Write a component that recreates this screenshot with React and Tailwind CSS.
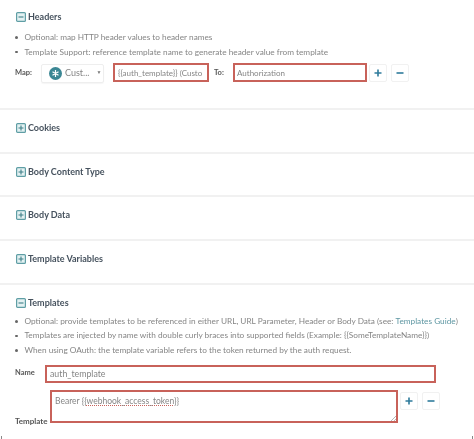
import React from 'react'

function ToggleIcon({ open }) {
    return (
        <svg width="10" height="10" viewBox="0 0 10 10" className="shrink-0">
            <rect x="0.6" y="0.6" width="8.8" height="8.8" rx="1" fill="#e3f1f2" stroke="#5f9ea5" strokeWidth="1.2" />
            <path d={open ? 'M2.5 5h5' : 'M2.5 5h5M5 2.5v5'} stroke="#3f7f88" strokeWidth="1.1" />
        </svg>
    )
}

function SectionTitle({ open, children }) {
    return (
        <div className="flex items-center gap-[2px] h-[12px]">
            <ToggleIcon open={open} />
            <span className="text-[9px] leading-[12px] font-bold text-[#46525e]">{children}</span>
        </div>
    )
}

function Collapsed({ title }) {
    return (
        <div className="h-[43.7px] pt-[12px] pl-[16px] border-b-2 border-[#f1f1f1]">
            <SectionTitle>{title}</SectionTitle>
        </div>
    )
}

function Notes({ items }) {
    return (
        <ul className="flex flex-col gap-[3.5px]">
            {items.map((item, index) => (
                <li key={index} className="flex items-center h-[11px] pl-[15px] text-[8.25px] leading-[11px] text-[#858585] whitespace-nowrap">
                    <span className="w-[2.5px] h-[2.5px] mr-[7px] rounded-full bg-[#666] shrink-0"></span>
                    {item}
                </li>
            ))}
        </ul>
    )
}

function AddRemove() {
    return (
        <div className="flex gap-[4px]">
            <button className="w-[18px] h-[18px] flex items-center justify-center rounded-[2px] border border-[#f1f1f1]">
                <svg width="8" height="8" viewBox="0 0 8 8"><path d="M0.5 4h7M4 0.5v7" stroke="#2f7b9c" strokeWidth="1.6" /></svg>
            </button>
            <button className="w-[18px] h-[18px] flex items-center justify-center rounded-[2px] border border-[#f1f1f1]">
                <svg width="8" height="8" viewBox="0 0 8 8"><path d="M0.5 4h7" stroke="#2f7b9c" strokeWidth="1.6" /></svg>
            </button>
        </div>
    )
}

export default function App() {
    return (
        <div className="w-[474px] h-[439px] flex flex-col bg-white overflow-hidden font-['Lato',sans-serif] blur-[0.3px]">
            {/* Headers */}
            <div className="h-[110px] shrink-0 pt-[11px] border-b-2 border-[#f1f1f1]">
                <div className="pl-[16px]"><SectionTitle open>Headers</SectionTitle></div>
                <div className="mt-[9px]">
                    <Notes items={[
                        'Optional: map HTTP header values to header names',
                        'Template Support: reference template name to generate header value from template',
                    ]} />
                </div>
                <div className="flex items-center mt-[5px] pl-[15px] text-[8px] text-[#858585]">
                    <span className="w-[26px] text-[7.5px] font-bold text-[#555]">Map:</span>
                    <div className="w-[63px] h-[19px] flex items-center pl-[7px] mt-[1px] rounded-[2px] border border-[#eeeeee] shadow-[0_1px_1px_rgba(0,0,0,0.04)]">
                        <svg width="13" height="13" viewBox="0 0 13 13" className="shrink-0">
                            <circle cx="6.5" cy="6.5" r="6.5" fill="#3b8794" />
                            <path d="M6.5 3v7M3.5 4.7l6 3.6M9.5 4.7l-6 3.6" stroke="#fff" strokeWidth="1.2" />
                        </svg>
                        <span className="ml-[3px] text-[9px]">Cust...</span>
                        <span className="ml-[7px] text-[5px] text-[#777]">▼</span>
                    </div>
                    <div className="w-[96px] h-[19px] ml-[9px] flex items-center pl-[3px] border-2 border-[#c8625a] overflow-hidden whitespace-nowrap">{'{{auth_template}} (Custo'}</div>
                    <span className="w-[24px] pl-[5px] text-[7.5px] font-bold text-[#555]">To:</span>
                    <div className="w-[134px] h-[19px] flex items-center pl-[2px] border-2 border-[#c8625a]">Authorization</div>
                    <div className="ml-[2px]"><AddRemove /></div>
                </div>
            </div>

            <div className="shrink-0">
                <Collapsed title="Cookies" />
                <Collapsed title="Body Content Type" />
                <Collapsed title="Body Data" />
                <Collapsed title="Template Variables" />
            </div>

            {/* Templates */}
            <div className="shrink-0 pt-[12px]">
                <div className="pl-[16px]"><SectionTitle open>Templates</SectionTitle></div>
                <div className="mt-[7px]">
                    <Notes items={[
                        <>Optional: provide templates to be referenced in either URL, URL Parameter, Header or Body Data (see:&nbsp;<span className="text-[#5f97a3]">Templates Guide</span>)</>,
                        'Templates are injected by name with double curly braces into supported fields (Example: {{SomeTemplateName}})',
                        'When using OAuth: the template variable refers to the token returned by the auth request.',
                    ]} />
                </div>
                <div className="flex items-center mt-[9px] pl-[15px] text-[8.8px] text-[#858585]">
                    <span className="w-[30px] -mt-[2px] text-[7.5px] font-bold text-[#555]">Name</span>
                    <div className="w-[391px] h-[18px] flex items-center pl-[3px] border-2 border-[#c8625a]">auth_template</div>
                </div>
                <div className="flex mt-[7px] pl-[15px] text-[8.5px] text-[#858585]">
                    <span className="w-[35px] self-end -mb-[3px] text-[8px] leading-[10px] font-bold text-[#555]">Template</span>
                    <div className="relative w-[348px] h-[33px] pl-[3px] pt-[3px] border-2 border-[#c8625a]">
                        Bearer {'{{'}<span className="underline decoration-dotted decoration-[#c8625a]">webhook_access_token</span>{'}}'}
                        <svg width="5" height="5" viewBox="0 0 5 5" className="absolute right-0 bottom-0">
                            <path d="M0 5l5-5M3 5l2-2" stroke="#888" strokeWidth="0.6" />
                        </svg>
                    </div>
                    <div className="ml-[2px] mt-[2px]"><AddRemove /></div>
                </div>
            </div>

            {/* page edge ticks at the very bottom */}
            <div className="mt-auto mx-[1px] h-[3px] border-x border-[#888]"></div>
        </div>
    )
}
